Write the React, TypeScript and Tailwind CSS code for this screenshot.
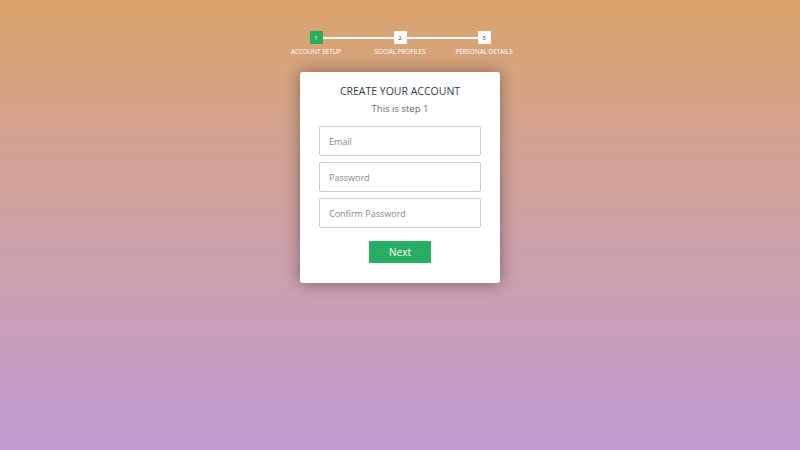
export default function App() {
  const steps = ["Account Setup", "Social Profiles", "Personal Details"];

  return (
    <div
      className="flex h-[450px] w-full flex-col items-center bg-gradient-to-b from-[#daa46a] to-[#c39bd4] pt-[31px]"
      style={{ fontFamily: '"Open Sans", "Liberation Sans", sans-serif' }}
    >
      {/* progress bar */}
      <div className="grid grid-cols-[84px_84px_84px]">
        {steps.map((label, i) => (
          <div key={label} className="flex flex-col items-center">
            <div className="flex w-full items-center">
              <div className={`h-[2px] flex-1 ${i === 0 ? "bg-transparent" : "bg-white"}`} />
              <div
                className={`flex h-[13px] w-[13px] items-center justify-center rounded-[1px] text-[6px] leading-none ${
                  i === 0 ? "bg-[#27ae60] text-white" : "bg-white text-[#333]"
                }`}
              >
                {i + 1}
              </div>
              <div className={`h-[2px] flex-1 ${i === 2 ? "bg-transparent" : "bg-white"}`} />
            </div>
            <div className="mt-[3px] whitespace-nowrap text-[6.3px] uppercase leading-[10px] text-white">
              {label}
            </div>
          </div>
        ))}
      </div>

      {/* form card */}
      <div className="mt-[15px] flex w-[200px] flex-col items-center rounded-[3px] bg-white px-[19px] pb-[20px] pt-[12px] shadow-[0_0_15px_1px_rgba(0,0,0,0.35)]">
        <h2 className="text-[10.5px] leading-[14px] text-[#2c3e50]">CREATE YOUR ACCOUNT</h2>
        <h3 className="mt-[5px] text-[9.5px] leading-[12px] text-[#666]">This is step 1</h3>

        <div className="mt-[11px] flex w-full flex-col gap-[6px]">
          {["Email", "Password", "Confirm Password"].map((p) => (
            <input
              key={p}
              type={p.includes("Password") ? "password" : "text"}
              placeholder={p}
              className="h-[30px] w-full rounded-[2px] border border-[#ccc] px-[9px] text-[9px] text-[#2c3e50] outline-none placeholder:text-[#888]"
            />
          ))}
        </div>

        <button className="mt-[13px] h-[22px] w-[62px] rounded-[1px] bg-[#27ae60] text-[10px] text-white">
          Next
        </button>
      </div>
    </div>
  );
}
